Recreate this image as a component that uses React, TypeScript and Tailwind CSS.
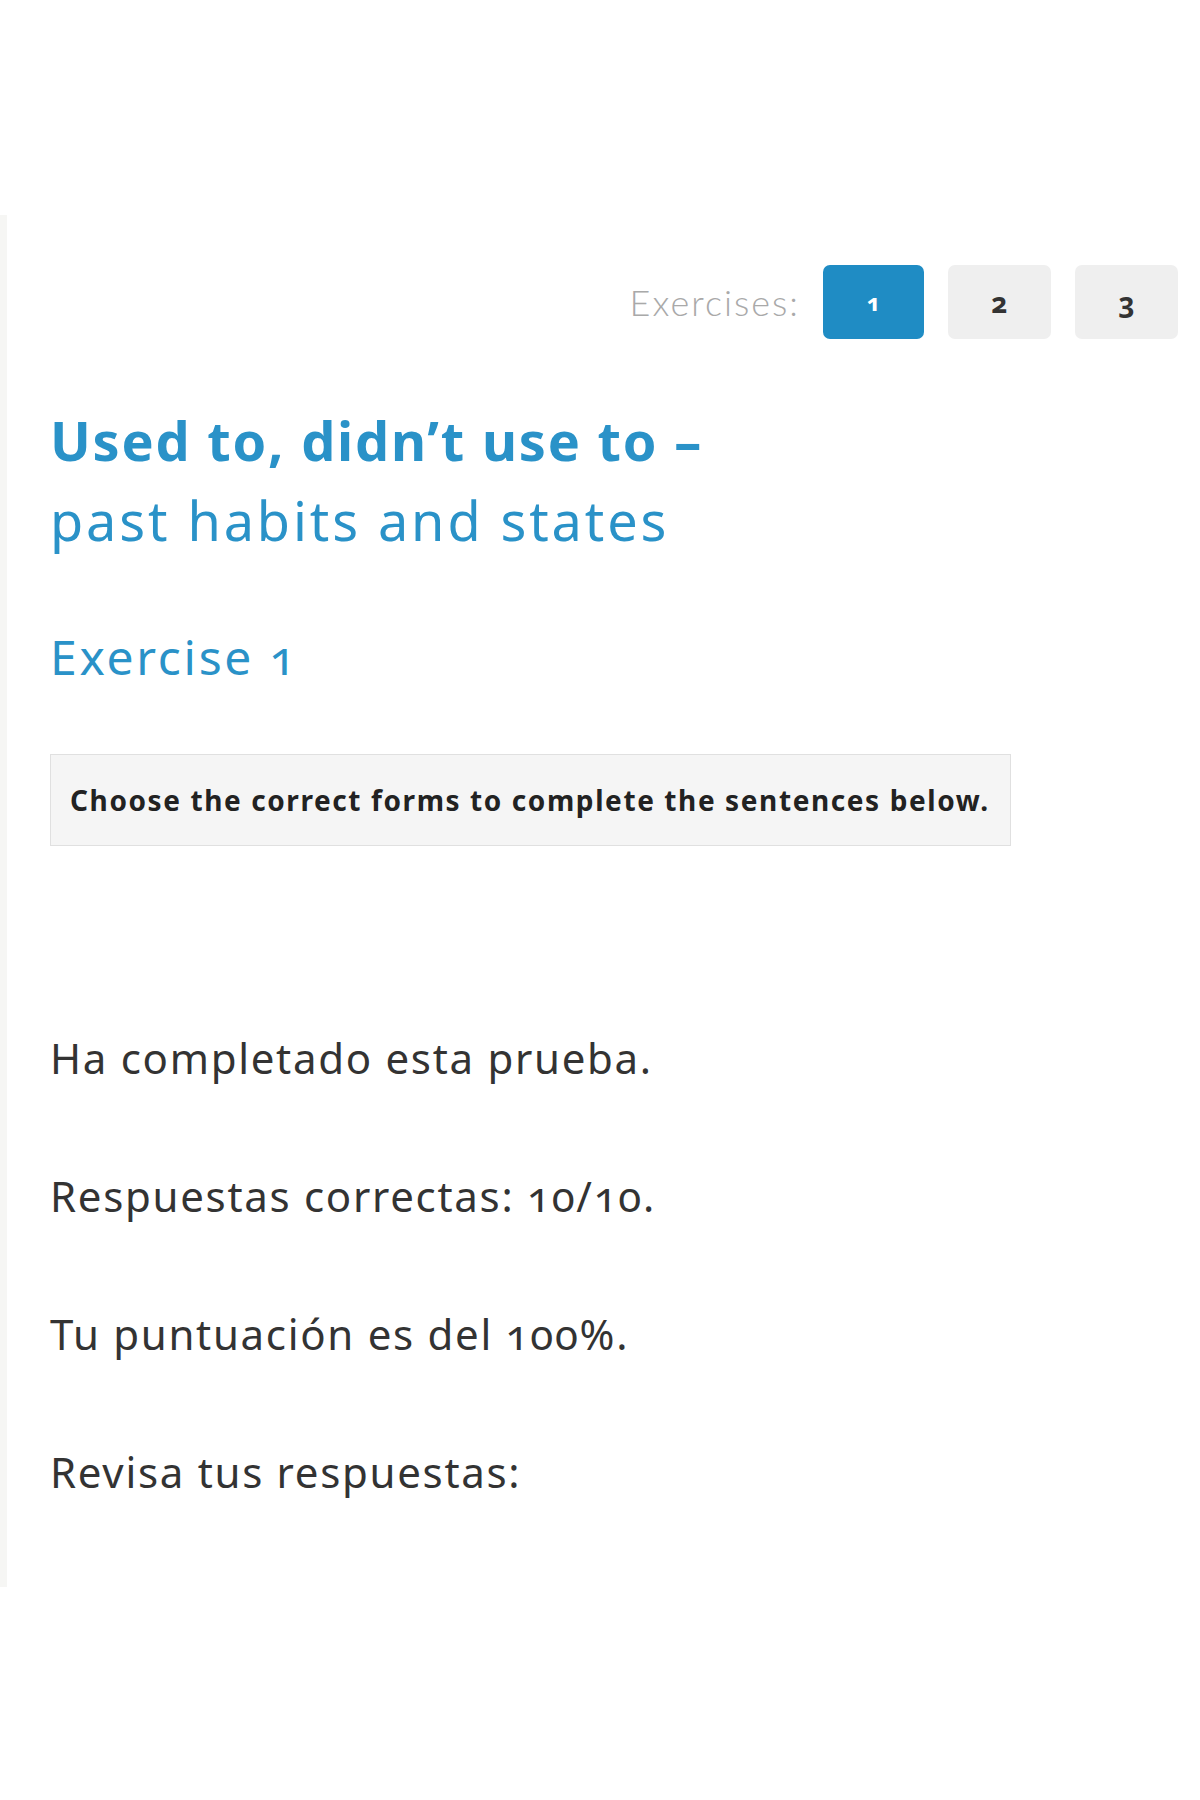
import React from "react";

export default function App() {
  const body = "text-[42px] leading-[50px] tracking-[1.7px] text-[#333333] oldstyle-nums";
  return (
    <div className="w-[1200px] h-[1800px] bg-white font-['Noto_Sans','Open_Sans',sans-serif]">
      <div className="h-[215px]" />
      <div className="h-[1372px] border-l-[7px] border-[#f6f6f4] pl-[43px] pr-[22px]">
        <div className="flex items-center justify-end pt-[50px]">
          <span className="mr-[23px] font-['Lato',sans-serif] text-[36px] font-light tracking-[2px] text-[#a9a9a9]">Exercises:</span>
          <div className="flex gap-[24px]">
            <button className="flex h-[74px] w-[101px] items-center justify-center rounded-[7px] bg-[#1f8cc4] text-[24px] font-bold text-white oldstyle-nums">1</button>
            <button className="flex h-[74px] w-[103px] items-center justify-center rounded-[7px] bg-[#efefef] text-[28px] font-bold text-[#333333] oldstyle-nums">2</button>
            <button className="flex h-[74px] w-[103px] items-center justify-center rounded-[7px] bg-[#efefef] text-[28px] font-bold text-[#333333] oldstyle-nums">3</button>
          </div>
        </div>
        <h1 className="mt-[61px] text-[54px] leading-[80px] text-[#2a92c8]">
          <span className="font-bold tracking-[1.8px]">Used to, didn’t use to –</span>
          <br />
          <span className="font-normal tracking-[2.9px]">past habits and states</span>
        </h1>
        <h2 className="mt-[67px] text-[48px] leading-[60px] tracking-[2.7px] text-[#2a92c8] oldstyle-nums">Exercise 1</h2>
        <div className="mt-[67px] w-[961px] h-[92px] flex items-center border border-[#e0e0e0] bg-[#f5f5f5] pl-[19px]">
          <p className="whitespace-nowrap text-[28px] font-bold tracking-[1.6px] text-[#222222]">Choose the correct forms to complete the sentences below.</p>
        </div>
        <div className="mt-[187px] flex flex-col gap-[88px]">
          <p className={body}>Ha completado esta prueba.</p>
          <p className={body}>Respuestas correctas: 10/10.</p>
          <p className={body}>Tu puntuación es del 100%.</p>
          <p className={body}>Revisa tus respuestas:</p>
        </div>
      </div>
    </div>
  );
}
